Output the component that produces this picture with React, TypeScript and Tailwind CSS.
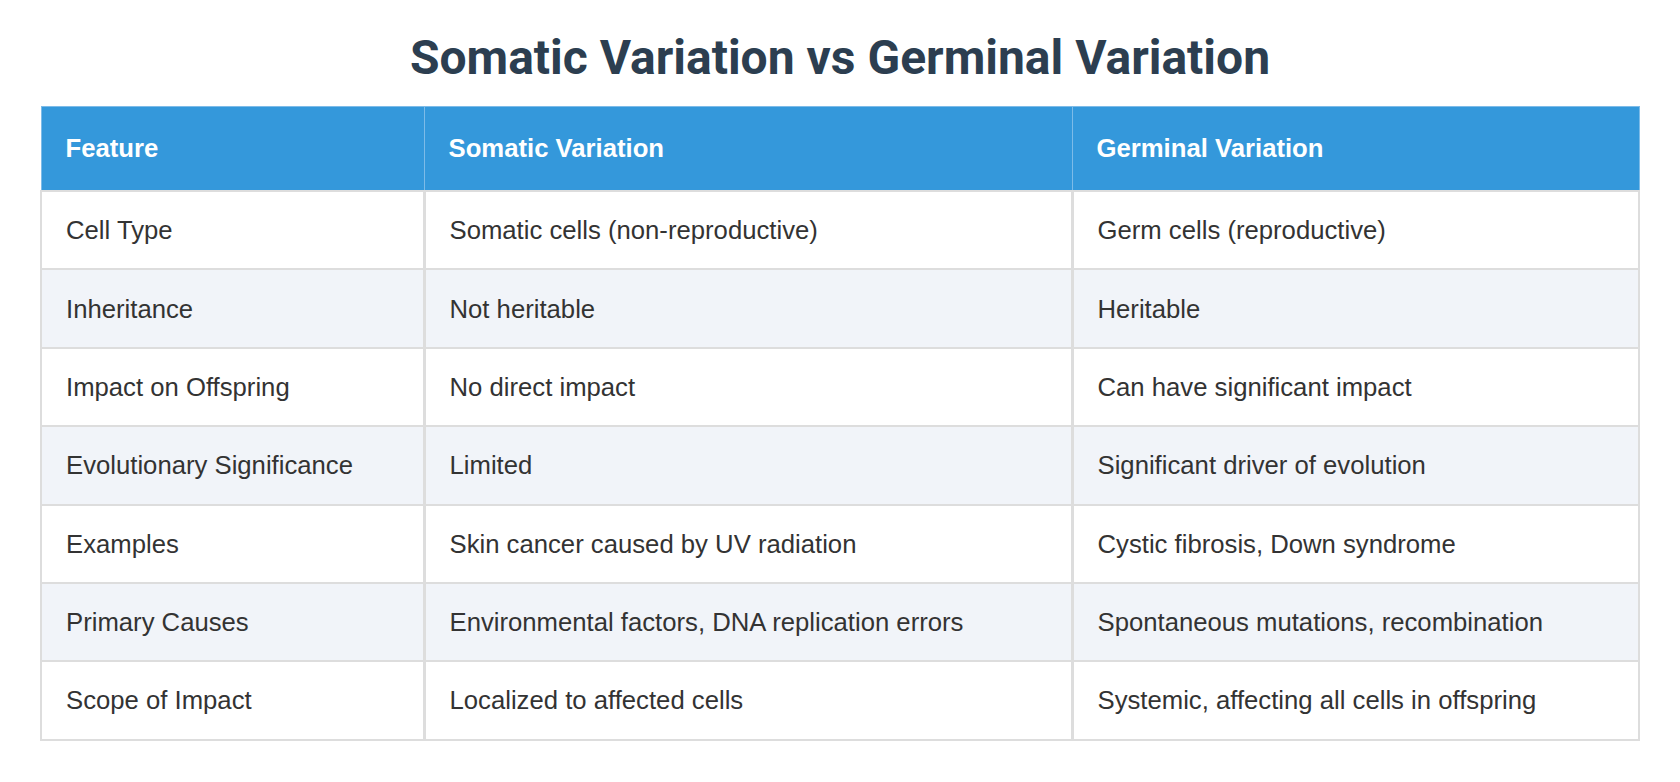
const rows: [string, string, string][] = [
  ['Cell Type', 'Somatic cells (non-reproductive)', 'Germ cells (reproductive)'],
  ['Inheritance', 'Not heritable', 'Heritable'],
  ['Impact on Offspring', 'No direct impact', 'Can have significant impact'],
  ['Evolutionary Significance', 'Limited', 'Significant driver of evolution'],
  ['Examples', 'Skin cancer caused by UV radiation', 'Cystic fibrosis, Down syndrome'],
  ['Primary Causes', 'Environmental factors, DNA replication errors', 'Spontaneous mutations, recombination'],
  ['Scope of Impact', 'Localized to affected cells', 'Systemic, affecting all cells in offspring'],
];

export default function App() {
  return (
    <div className="min-h-screen bg-white px-[40px] pt-[30px] pb-10">
      <h1 className="mb-[20px] text-center font-['Roboto',sans-serif] text-[48px] font-bold leading-[56px] text-[#2c3e50]">
        Somatic Variation vs Germinal Variation
      </h1>
      <table className="w-full table-fixed border-collapse font-['Liberation_Sans',Arial,sans-serif] text-[25.7px] leading-[30px] text-[#333333]">
        <colgroup>
          <col className="w-[383px]" />
          <col className="w-[648px]" />
          <col />
        </colgroup>
        <thead>
          <tr className="bg-[#3498db] text-white">
            <th className="border border-[#7dbbe8] px-6 pt-[26px] pb-[27px] text-left font-bold">Feature</th>
            <th className="border border-[#7dbbe8] px-6 pt-[26px] pb-[27px] text-left font-bold">Somatic Variation</th>
            <th className="border border-[#7dbbe8] px-6 pt-[26px] pb-[27px] text-left font-bold">Germinal Variation</th>
          </tr>
        </thead>
        <tbody>
          {rows.map((r, i) => (
            <tr key={r[0]} className={i % 2 === 1 ? 'bg-[#f1f4f9]' : 'bg-white'}>
              {r.map((c, j) => (
                <td
                  key={j}
                  className="border-x-[3px] border-y-2 border-[#dddddd] px-6 py-[23.2px] text-left first:border-l-2 last:border-r-2"
                >
                  {c}
                </td>
              ))}
            </tr>
          ))}
        </tbody>
      </table>
    </div>
  );
}
